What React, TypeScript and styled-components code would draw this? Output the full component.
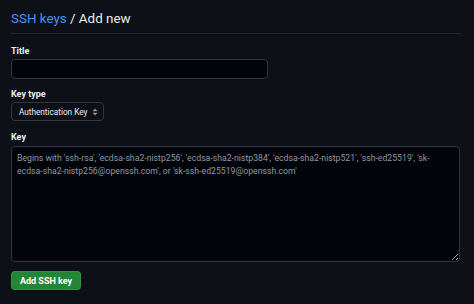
import styled, { createGlobalStyle } from "styled-components";

const GlobalStyle = createGlobalStyle`
  html, body {
    margin: 0;
    padding: 0;
    background: #0d1117;
  }
  body {
    font-family: Roboto, "Liberation Sans", Arial, sans-serif;
    color: #e6edf3;
  }
`;

const Page = styled.div`
  width: 474px;
  height: 304px;
  box-sizing: border-box;
  padding: 6px 12px 0 11px;
  display: flex;
  flex-direction: column;
  background: #0d1117;
  overflow: hidden;
`;

const Header = styled.h2`
  margin: 0;
  font-size: 13.4px;
  font-weight: 400;
  line-height: 25px;
  padding-bottom: 2px;
  border-bottom: 1px solid #21262d;
  color: #e6edf3;
`;

const Crumb = styled.span`
  color: #4493f8;
`;

const Group = styled.div<{ $top: number }>`
  display: flex;
  flex-direction: column;
  align-items: flex-start;
  margin-top: ${(p) => p.$top}px;
`;

const Label = styled.label`
  font-size: 9px;
  font-weight: 700;
  line-height: 12px;
  margin-bottom: 2px;
  color: #e6edf3;
`;

const Input = styled.input`
  box-sizing: border-box;
  width: 257px;
  height: 20px;
  background: #010409;
  border: 1px solid #30363d;
  border-radius: 4px;
  outline: none;
  color: #e6edf3;
  padding: 0 6px;
`;

const SelectBox = styled.button`
  box-sizing: border-box;
  height: 19px;
  width: 93px;
  display: flex;
  align-items: center;
  justify-content: space-between;
  padding: 0 5px 0 7px;
  background: #0d1117;
  border: 1px solid #30363d;
  border-radius: 4px;
  color: #e6edf3;
  font-family: inherit;
  font-size: 8.2px;
  white-space: nowrap;
  cursor: pointer;
`;

const KeyArea = styled.textarea`
  box-sizing: border-box;
  width: 449px;
  height: 116px;
  margin-top: 1px;
  background: #010409;
  border: 1px solid #30363d;
  border-radius: 4px;
  outline: none;
  padding: 5px 5px;
  resize: vertical;
  color: #e6edf3;
  font-family: inherit;
  font-size: 8.7px;
  line-height: 13px;
  &::placeholder {
    color: #9198a1;
  }
`;

const SubmitButton = styled.button`
  margin-top: 9px;
  align-self: flex-start;
  box-sizing: border-box;
  height: 19px;
  width: 70px;
  padding: 0;
  background: #238636;
  border: 1px solid rgba(240, 246, 252, 0.1);
  border-radius: 4px;
  color: #ffffff;
  font-family: inherit;
  font-size: 9px;
  font-weight: 700;
  cursor: pointer;
`;

const SortIcon = () => (
  <svg width="6" height="8" viewBox="0 0 6 8" fill="#9198a1">
    <path d="M3 0.5 L5.5 3.2 H0.5 Z" />
    <path d="M3 7.5 L5.5 4.8 H0.5 Z" />
  </svg>
);

const App = () => {
  return (
    <>
      <GlobalStyle />
      <Page>
        <Header>
          <Crumb>SSH keys</Crumb> / Add new
        </Header>
        <Group $top={11}>
          <Label>Title</Label>
          <Input type="text" />
        </Group>
        <Group $top={9}>
          <Label>Key type</Label>
          <SelectBox type="button">
            Authentication Key
            <SortIcon />
          </SelectBox>
        </Group>
        <Group $top={10}>
          <Label>Key</Label>
          <KeyArea placeholder="Begins with 'ssh-rsa', 'ecdsa-sha2-nistp256', 'ecdsa-sha2-nistp384', 'ecdsa-sha2-nistp521', 'ssh-ed25519', 'sk-ecdsa-sha2-nistp256@openssh.com', or 'sk-ssh-ed25519@openssh.com'" />
        </Group>
        <SubmitButton type="button">Add SSH key</SubmitButton>
      </Page>
    </>
  );
};

export default App;
